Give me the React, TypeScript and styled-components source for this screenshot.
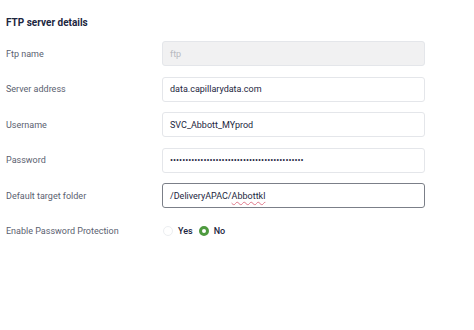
import React from "react";
import styled, { createGlobalStyle } from "styled-components";

const Global = createGlobalStyle`
  body {
    margin: 0;
    background: #ffffff;
    font-family: Roboto, "Liberation Sans", sans-serif;
  }
`;

const Page = styled.div`
  padding: 16px 6px 0 6px;
  width: 474px;
  box-sizing: border-box;
`;

const Title = styled.h2`
  margin: 0 0 11px 0;
  font-size: 10px;
  font-weight: 700;
  color: #1c2640;
  line-height: 14px;
`;

const Row = styled.div`
  display: grid;
  grid-template-columns: 156px 263px;
  align-items: center;
  height: 25px;
  margin-bottom: 10.5px;
`;

const Label = styled.label`
  font-size: 9px;
  color: #5b6170;
`;

const Field = styled.div<{ disabled?: boolean; focused?: boolean }>`
  height: 25px;
  box-sizing: border-box;
  border: 1px solid ${({ focused }) => (focused ? "#7b7f88" : "#e4e6ea")};
  border-radius: 3px;
  background: ${({ disabled }) => (disabled ? "#f1f1f2" : "#ffffff")};
  color: ${({ disabled }) => (disabled ? "#b7bac0" : "#1c2640")};
  font-size: 9px;
  display: flex;
  align-items: center;
  padding: 0 7px;
`;

const Squiggle = styled.span`
  text-decoration: underline wavy #e0788a;
  text-decoration-thickness: 0.5px;
  text-underline-offset: 2px;
`;

const Dots = styled.span`
  letter-spacing: 0;
  font-size: 9px;
`;

const Radios = styled.div`
  display: flex;
  align-items: center;
  gap: 6px;
  padding-left: 1px;
`;

const Option = styled.span`
  display: flex;
  align-items: center;
  gap: 5px;
  font-size: 9px;
  font-weight: 500;
  color: #1c2640;
`;

const Dot = styled.span<{ checked?: boolean }>`
  width: 10px;
  height: 10px;
  box-sizing: border-box;
  border-radius: 50%;
  border: ${({ checked }) => (checked ? "3px solid #4e9a3f" : "1px solid #eceef1")};
  background: #ffffff;
`;

export default function App() {
  return (
    <Page>
      <Global />
      <Title>FTP server details</Title>
      <Row>
        <Label>Ftp name</Label>
        <Field disabled>ftp</Field>
      </Row>
      <Row>
        <Label>Server address</Label>
        <Field>data.capillarydata.com</Field>
      </Row>
      <Row>
        <Label>Username</Label>
        <Field>SVC_Abbott_MYprod</Field>
      </Row>
      <Row>
        <Label>Password</Label>
        <Field>
          <Dots>{"•".repeat(44)}</Dots>
        </Field>
      </Row>
      <Row>
        <Label>Default target folder</Label>
        <Field focused>
          /DeliveryAPAC/<Squiggle>Abbottkl</Squiggle>
        </Field>
      </Row>
      <Row>
        <Label>Enable Password Protection</Label>
        <Radios>
          <Option>
            <Dot />
            Yes
          </Option>
          <Option>
            <Dot checked />
            No
          </Option>
        </Radios>
      </Row>
    </Page>
  );
}
